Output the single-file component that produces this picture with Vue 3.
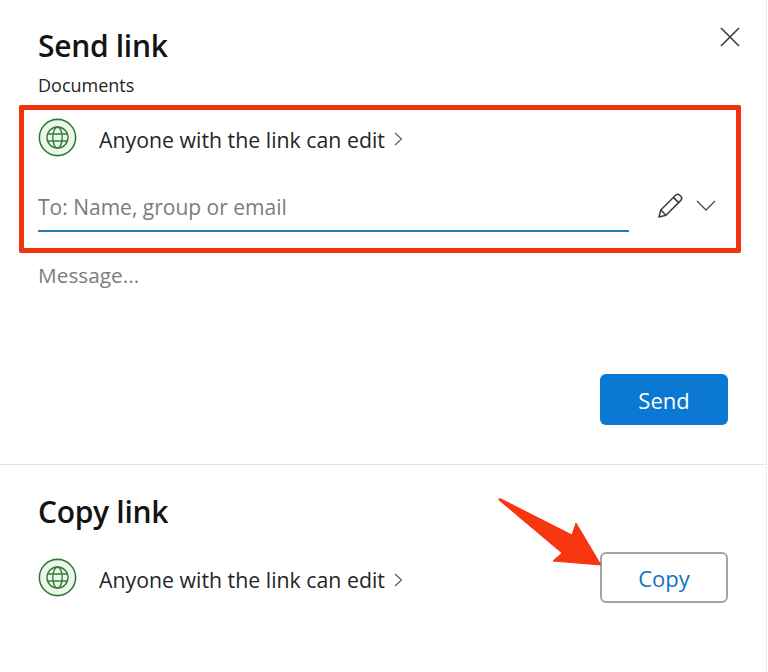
<template>
  <div class="panel">
    <section class="send">
      <header class="head">
        <h1 class="title">Send link</h1>
        <button class="close" aria-label="Close">
          <svg width="20" height="20" viewBox="0 0 20 20"><path d="M1 1 19 19M19 1 1 19" fill="none" stroke="#3c3c3c" stroke-width="1.6" /></svg>
        </button>
      </header>
      <p class="folder">Documents</p>

      <!-- Red highlight round the sharing fields -->
      <div class="highlight">
        <div class="perm">
          <svg class="globe" viewBox="0 0 40 40">
            <circle cx="20" cy="20" r="18.6" fill="#edf5ed" stroke="#2e7d32" stroke-width="1.6" />
            <g fill="none" stroke="#2e7d32" stroke-width="1.4">
              <circle cx="20" cy="20" r="10.8" />
              <ellipse cx="20" cy="20" rx="4.8" ry="10.8" />
              <path d="M9.8 16.4h20.4M9.8 23.6h20.4" />
            </g>
          </svg>
          <span class="perm-text">Anyone with the link can edit</span>
          <svg class="chev" width="9" height="14" viewBox="0 0 9 14"><path d="M1 1l6.5 6-6.5 6" fill="none" stroke="#5f5f5f" stroke-width="1.2" /></svg>
        </div>
        <div class="to-row">
          <div class="to-input">To: Name, group or email</div>
          <svg class="pencil" width="28" height="28" viewBox="0 0 28 28">
            <g fill="none" stroke="#3a3a3a" stroke-width="1.5" stroke-linejoin="round">
              <path d="M3 25l1.8-7L19.6 3.2a2.9 2.9 0 0 1 4.1 0l1.1 1.1a2.9 2.9 0 0 1 0 4.1L10 23.2z" />
              <path d="M17.4 5.4l5.2 5.2M4.8 18l5.2 5.2" />
            </g>
          </svg>
          <svg class="caret" width="20" height="11" viewBox="0 0 20 11"><path d="M1 1l9 9 9-9" fill="none" stroke="#4a4a4a" stroke-width="1.3" /></svg>
        </div>
      </div>

      <p class="message">Message...</p>
      <div class="actions">
        <button class="btn primary">Send</button>
      </div>
    </section>

    <section class="copy">
      <h2 class="title">Copy link</h2>
      <div class="copy-row">
        <svg class="globe" viewBox="0 0 40 40">
          <circle cx="20" cy="20" r="18.6" fill="#edf5ed" stroke="#2e7d32" stroke-width="1.6" />
          <g fill="none" stroke="#2e7d32" stroke-width="1.4">
            <circle cx="20" cy="20" r="10.8" />
            <ellipse cx="20" cy="20" rx="4.8" ry="10.8" />
            <path d="M9.8 16.4h20.4M9.8 23.6h20.4" />
          </g>
        </svg>
        <span class="perm-text">Anyone with the link can edit</span>
        <svg class="chev" width="9" height="14" viewBox="0 0 9 14"><path d="M1 1l6.5 6-6.5 6" fill="none" stroke="#5f5f5f" stroke-width="1.2" /></svg>
        <button class="btn outline">Copy</button>
      </div>
    </section>

    <!-- Annotation arrow pointing at the Copy button -->
    <svg class="arrow" width="110" height="80" viewBox="0 0 110 80">
      <path d="M2 3 Q1 1 4 2 L75 38 L79 26 L104 68 L56 64 L65 56 Z" fill="#f7350f" stroke="#f7350f" stroke-width="1" stroke-linejoin="round" />
    </svg>
  </div>
</template>

<script setup>
</script>

<style scoped>
.panel {
  position: relative;
  width: 766px;
  height: 672px;
  background: #fff;
  border-right: 1px solid #ececec;
  font-family: "Open Sans", "Noto Sans", sans-serif;
  color: #1f1f1f;
  overflow: hidden;
}

.send {
  height: 465px;
  padding: 0 38px;
  box-sizing: border-box;
  border-bottom: 1px solid #e4e4e4;
}

.head {
  display: flex;
  justify-content: space-between;
  align-items: flex-start;
  padding-top: 26px;
}

.title {
  margin: 0;
  font-size: 30px;
  line-height: 40px;
  font-weight: 600;
  color: #141414;
  letter-spacing: -0.3px;
}

.close {
  padding: 0;
  margin: 1px -12px 0 0;
  border: none;
  background: none;
  display: flex;
}

.folder {
  margin: 8px 0 0;
  font-size: 18px;
  line-height: 22px;
  color: #262626;
}

.highlight {
  margin: 9px -13px 0 -19px;
  height: 148px;
  box-sizing: border-box;
  padding: 3px 14px 0 14px;
  border: 5px solid #f0320f;
  border-radius: 2px;
}

.perm {
  display: flex;
  align-items: center;
  height: 48px;
}

.globe {
  width: 39px;
  height: 39px;
  flex: none;
}

.perm-text {
  margin-left: 22px;
  margin-top: 6px;
  font-size: 21.3px;
  line-height: 28px;
  color: #262626;
}

.copy-row .perm-text {
  margin-top: 4px;
}

.chev {
  margin-left: 9px;
  margin-top: 4px;
}

.to-row {
  display: flex;
  align-items: center;
  margin-top: 21px;
}

.to-input {
  width: 591px;
  height: 50px;
  box-sizing: border-box;
  border-bottom: 2px solid #2a7ab8;
  font-size: 21px;
  line-height: 50px;
  color: #7c7c7c;
  flex: none;
}

.pencil {
  margin-left: 27px;
  margin-bottom: 3px;
}

.caret {
  margin-left: 12px;
  margin-bottom: 3px;
}

.message {
  margin: 8px 0 0;
  font-size: 20.8px;
  line-height: 28px;
  color: #7c7c7c;
}

.actions {
  display: flex;
  justify-content: flex-end;
  margin-top: 85px;
}

.btn {
  width: 128px;
  height: 51px;
  border-radius: 6px;
  font-family: inherit;
  font-size: 22px;
  font-weight: 500;
  box-sizing: border-box;
}

.primary {
  background: #0b78d4;
  border: none;
  color: #fff;
}

.outline {
  margin-left: auto;
  background: #fff;
  border: 2px solid #a3a3a3;
  color: #1173c0;
}

.copy {
  padding: 27px 38px 0 38px;
}

.copy-row {
  display: flex;
  align-items: center;
  margin-top: 20px;
}

.arrow {
  position: absolute;
  left: 497px;
  top: 497px;
}
</style>
